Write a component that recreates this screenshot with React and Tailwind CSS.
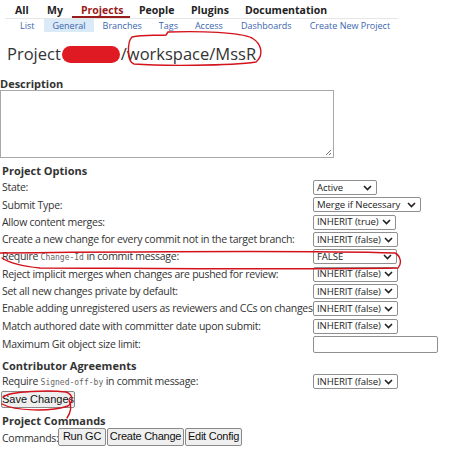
import React from "react";

const Chevron = () => (
  <svg width="9" height="6" viewBox="0 0 9 6" className="shrink-0">
    <path d="M1 1 L4.5 4.5 L8 1" fill="none" stroke="#222" strokeWidth="1.6" />
  </svg>
);

const Select = ({ label, w }) => (
  <div
    className="flex h-[15px] items-center justify-between whitespace-nowrap rounded-[2px] border border-[#8f8f8f] bg-white pl-[3px] pr-[4px] text-[9.6px] leading-none tracking-[-0.1px] text-[#222]"
    style={{ width: w }}
  >
    <span>{label}</span>
    <Chevron />
  </div>
);

const Btn = ({ children, className = "" }) => (
  <div
    className={
      "flex h-[17px] items-center justify-center whitespace-nowrap rounded-[2px] border border-[#8a8a8a] bg-[#efefef] text-[11px] leading-none text-[#111] " +
      className
    }
    style={{ fontFamily: '"Liberation Sans", Arial, sans-serif' }}
  >
    {children}
  </div>
);

const Mono = ({ children }) => (
  <span
    className="text-[8px] tracking-normal text-[#666]"
    style={{ fontFamily: '"DejaVu Sans Mono", "Liberation Mono", monospace' }}
  >
    {children}
  </span>
);

const rows = [
  ["State:", "Active", 64],
  ["Submit Type:", "Merge if Necessary", 108],
  ["Allow content merges:", "INHERIT (true)", 83],
  ["Create a new change for every commit not in the target branch:", "INHERIT (false)", 85],
  [<span>Require <Mono>Change-Id</Mono> in commit message:</span>, "FALSE", 84],
  ["Reject implicit merges when changes are pushed for review:", "INHERIT (false)", 85],
  ["Set all new changes private by default:", "INHERIT (false)", 85],
  ["Enable adding unregistered users as reviewers and CCs on changes:", "INHERIT (false)", 85],
  ["Match authored date with committer date upon submit:", "INHERIT (false)", 85],
];

export default function App() {
  return (
    <div
      className="relative h-[458px] w-[474px] overflow-hidden bg-white text-[#333]"
      style={{ fontFamily: '"Open Sans", "Noto Sans", sans-serif' }}
    >
      {/* top nav */}
      <div className="ml-[5px] w-[393px] border-b border-[#e6e6e6]">
        <div className="flex h-[18px] items-end pl-[10px] text-[10.5px] font-bold leading-none text-[#222]">
          <div className="w-[32px] pb-[3px]">All</div>
          <div className="w-[25px] pb-[3px]">My</div>
          <div className="w-[58px] border-b-2 border-[#9b1c1c] pb-[1px] pl-[9px] text-[#9b1c1c]">Projects</div>
          <div className="ml-[9px] w-[52px] pb-[3px]">People</div>
          <div className="w-[54px] pb-[3px]">Plugins</div>
          <div className="pb-[3px]">Documentation</div>
        </div>
      </div>
      <div className="flex h-[13px] items-center gap-[1px] pl-[12px] text-[9px] leading-none text-[#3b66ad]">
        <div className="flex h-full items-center px-[8px]">List</div>
        <div className="ml-[1px] flex h-full items-center bg-[#dbeaf7] px-[8px]">General</div>
        <div className="flex h-full items-center px-[8px]">Branches</div>
        <div className="flex h-full items-center px-[8px]">Tags</div>
        <div className="flex h-full items-center px-[8px]">Access</div>
        <div className="ml-[1px] flex h-full items-center px-[8px]">Dashboards</div>
        <div className="ml-[1px] flex h-full items-center px-[8px]">Create New Project</div>
      </div>

      {/* title */}
      <div className="mt-[9px] flex h-[26px] items-center pl-[7px] text-[16.5px] leading-none text-[#333]">
        <span>Project</span>
        <span className="mx-[1px] h-[17px] w-[58px] rounded-full bg-[#e01a22]" />
        <span>/workspace/MssR</span>
      </div>

      {/* description */}
      <div className="mt-[11px] text-[11px] font-bold leading-none text-[#333]">Description</div>
      <div className="relative mt-[1px] h-[68px] w-[334px] border border-[#a8a8a8] bg-white">
        <svg className="absolute bottom-[1px] right-[1px]" width="7" height="7" viewBox="0 0 7 7">
          <path d="M6 1 L1 6 M6 4 L4 6" stroke="#777" strokeWidth="1" />
        </svg>
      </div>

      {/* project options */}
      <div className="mt-[7px] pl-[2px] text-[11px] font-bold leading-none text-[#333]">Project Options</div>
      <div className="mt-[3px] grid grid-cols-[311px_auto] pl-[2px] text-[10.5px] leading-none tracking-[-0.28px]">
        {rows.map(([l, v, w], i) => (
          <React.Fragment key={i}>
            <div className="flex h-[17.3px] items-center whitespace-nowrap">{l}</div>
            <div className="flex h-[17.3px] items-center">
              <Select label={v} w={w} />
            </div>
          </React.Fragment>
        ))}
        <div className="flex h-[19px] items-center whitespace-nowrap">Maximum Git object size limit:</div>
        <div className="flex h-[19px] items-center">
          <div className="h-[17px] w-[125px] rounded-[2px] border border-[#8f8f8f] bg-white" />
        </div>
      </div>

      {/* contributor agreements */}
      <div className="mt-[6px] pl-[2px] text-[11px] font-bold leading-none text-[#333]">Contributor Agreements</div>
      <div className="mt-[2px] grid grid-cols-[311px_auto] pl-[2px] text-[10.5px] leading-none tracking-[-0.28px]">
        <div className="flex h-[18px] items-center whitespace-nowrap">
          <span>Require <Mono>Signed-off-by</Mono> in commit message:</span>
        </div>
        <div className="flex h-[18px] items-center">
          <Select label="INHERIT (false)" w={85} />
        </div>
      </div>
      <div className="flex">
        <Btn className="ml-[1px] w-[74px]">Save Changes</Btn>
      </div>

      {/* project commands */}
      <div className="mt-[7px] pl-[2px] text-[11px] font-bold leading-none text-[#333]">Project Commands</div>
      <div className="mt-[2px] flex items-center pl-[2px] text-[10.5px] leading-none tracking-[-0.25px]">
        <span className="w-[56px] pt-[3px]">Commands:</span>
        <Btn className="h-[18px] w-[48px]">Run GC</Btn>
        <Btn className="ml-[1px] h-[18px] w-[77px]">Create Change</Btn>
        <Btn className="ml-[1px] h-[18px] w-[57px]">Edit Config</Btn>
      </div>

      {/* red annotations */}
      <svg className="pointer-events-none absolute left-0 top-0" width="474" height="458" viewBox="0 0 474 458">
        <g fill="none" stroke="#d4121c" strokeWidth="1.4" strokeLinecap="round">
          <path d="M168,32 C200,31 240,32 252,38 C262,44 264,55 256,62 C230,66 160,66 134,64 C127,62 127,42 132,37 C145,34 160,36 166,35 L168,32" />
          <path d="M0,253 C100,252 300,250 395,253 C401,256 402,264 398,268 C300,270 100,268 40,268 C20,266 8,262 2,258" />
          <path d="M3,397 C10,391 50,390 66,392 C74,395 73,402 68,406 C50,412 15,411 2,404" />
          <path d="M69,400 C72,406 71,412 67,418" />
        </g>
      </svg>
    </div>
  );
}
